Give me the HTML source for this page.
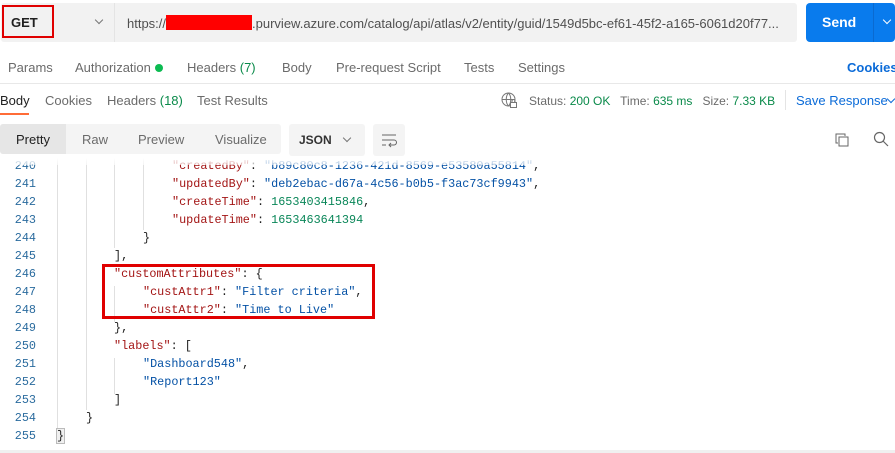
<!DOCTYPE html>
<html><head><meta charset="utf-8"><style>
*{margin:0;padding:0;box-sizing:border-box}
body{width:895px;height:453px;overflow:hidden;background:#fff;font-family:"Liberation Sans",sans-serif;position:relative;color:#212121}
.a{position:absolute;white-space:nowrap}
.t{font-size:13px;color:#6b6b6b}
.code{position:absolute;left:0;top:158px;width:895px;height:292px;overflow:hidden}
.ln{position:absolute;left:0;width:36px;text-align:right;font-family:"Liberation Mono",monospace;font-size:11.8px;color:#2a6b9e}
.c{position:absolute;font-family:"Liberation Mono",monospace;font-size:11.8px;color:#212121;white-space:pre}
.k{color:#a31515}.s{color:#0451a5}.n{color:#098658}
.g{position:absolute;width:1px;background:#e0e0e0}
.chev{position:absolute;width:6px;height:6px;border-right:1px solid #777;border-bottom:1px solid #777;transform:rotate(45deg)}
</style></head><body>
<div class="a" style="left:1px;top:3px;width:796px;height:39px;background:#f2f2f2;border-radius:3px"></div>
<div class="a" style="left:114px;top:3px;width:1px;height:39px;background:#e4e4e4"></div>
<div class="a" style="left:2px;top:5px;width:52px;height:33px;border:2px solid #e00000"></div>
<div class="a" style="left:11px;top:15px;font-size:13px;font-weight:bold;color:#212121">GET</div>
<div class="chev" style="left:96px;top:17px"></div>
<div class="a" style="left:127px;top:15px;font-size:13px;color:#505050">https://<span style="display:inline-block;width:86px;height:15px;background:#f00;vertical-align:-2px"></span>.purview.azure.com/catalog/api/atlas/v2/entity/guid/1549d5bc-ef61-45f2-a165-6061d20f77...</div>
<div class="a" style="left:806px;top:3px;width:89px;height:39px;background:#097bed;border-radius:4px"></div>
<div class="a" style="left:822px;top:14px;font-size:14px;font-weight:bold;color:#fff">Send</div>
<div class="a" style="left:873px;top:3px;width:1px;height:39px;background:#0a6ad0"></div>
<div class="chev" style="left:884px;top:17px;border-color:#fff"></div>

<div class="a t" style="left:8px;top:60px">Params</div>
<div class="a t" style="left:75px;top:60px">Authorization <span style="display:inline-block;width:8px;height:8px;border-radius:50%;background:#0cbb52"></span></div>
<div class="a t" style="left:187px;top:60px">Headers <span style="color:#0a8a4a">(7)</span></div>
<div class="a t" style="left:282px;top:60px">Body</div>
<div class="a t" style="left:336px;top:60px">Pre-request Script</div>
<div class="a t" style="left:464px;top:60px">Tests</div>
<div class="a t" style="left:518px;top:60px">Settings</div>
<div class="a" style="left:847px;top:60px;font-size:13px;font-weight:bold;color:#0b6bd8">Cookies</div>
<div class="a" style="left:0;top:83px;width:895px;height:1px;background:#e8e8e8"></div>

<div class="a" style="left:0;top:93px;font-size:13px;color:#212121">Body</div>
<div class="a" style="left:0;top:113px;width:29px;height:2px;background:#ff6c37"></div>
<div class="a t" style="left:45px;top:93px">Cookies</div>
<div class="a t" style="left:107px;top:93px">Headers <span style="color:#0a8a4a">(18)</span></div>
<div class="a t" style="left:197px;top:93px">Test Results</div>
<svg class="a" style="left:501px;top:92px" width="17" height="17" viewBox="0 0 17 17" fill="none" stroke="#777" stroke-width="1"><circle cx="7.5" cy="7.5" r="6.5"/><path d="M1 7.5h13M7.5 1c-3 3-3 10 0 13M7.5 1c3 3 3 10 0 13"/><rect x="9.5" y="10.5" width="6" height="5" fill="#fff"/><path d="M11 10.5V9a1.5 1.5 0 0 1 3 0v1.5"/></svg>
<div class="a" style="left:529px;top:94px;font-size:12px;color:#6b6b6b">Status: <span style="color:#0a8a4a">200 OK</span>&nbsp;&nbsp; Time: <span style="color:#0a8a4a">635 ms</span>&nbsp;&nbsp; Size: <span style="color:#0a8a4a">7.33 KB</span></div>
<div class="a" style="left:785px;top:90px;width:1px;height:20px;background:#e4e4e4"></div>
<div class="a" style="left:796px;top:93px;font-size:13px;color:#0b6bd8">Save Response</div>
<div class="chev" style="left:888px;top:96px;border-color:#0b6bd8"></div>

<div class="a" style="left:0;top:124px;width:281px;height:30px;background:#f4f4f4;border-radius:3px"></div>
<div class="a" style="left:0;top:124px;width:66px;height:30px;background:#e6e6e6;border-radius:3px 0 0 3px"></div>
<div class="a" style="left:16px;top:132px;font-size:13px;color:#212121">Pretty</div>
<div class="a t" style="left:82px;top:132px">Raw</div>
<div class="a t" style="left:138px;top:132px">Preview</div>
<div class="a t" style="left:215px;top:132px">Visualize</div>
<div class="a" style="left:289px;top:124px;width:76px;height:32px;background:#f4f4f4;border-radius:3px"></div>
<div class="a" style="left:299px;top:133px;font-size:12px;font-weight:bold;color:#333">JSON</div>
<div class="chev" style="left:344px;top:135px"></div>
<div class="a" style="left:373px;top:124px;width:32px;height:32px;background:#f4f4f4;border-radius:3px"></div>
<svg class="a" style="left:381px;top:132px" width="16" height="16" viewBox="0 0 16 16" fill="none" stroke="#666" stroke-width="1"><path d="M1 3h14M1 8h12a2.5 2.5 0 0 1 0 5H8M10 11l-2 2 2 2M1 13h4"/></svg>
<svg class="a" style="left:834px;top:132px" width="16" height="16" viewBox="0 0 16 16" fill="none" stroke="#666"><path d="M4 11H2V2h9v2"/><rect x="5" y="5" width="9" height="9"/></svg>
<svg class="a" style="left:873px;top:131px" width="16" height="16" viewBox="0 0 16 16" fill="none" stroke="#666" stroke-width="1.2"><circle cx="6.5" cy="6.5" r="5"/><path d="M10 10l5 5"/></svg>

<div class="code">
<div class="g" style="left:57px;top:0;height:270px"></div>
<div class="g" style="left:86px;top:0;height:252px"></div>
<div class="g" style="left:114px;top:0;height:90px"></div>
<div class="g" style="left:143px;top:0;height:72px"></div>
<div class="g" style="left:114px;top:128px;height:36px"></div>
<div class="g" style="left:114px;top:200px;height:36px"></div>
<div class="ln" style="top:1px">240</div><div class="c" style="left:172px;top:1px"><span class="k">"createdBy"</span>: <span class="s">"b89c80c8-1236-421d-8569-e53580a55814"</span>,</div>
<div class="ln" style="top:19px">241</div><div class="c" style="left:172px;top:19px"><span class="k">"updatedBy"</span>: <span class="s">"deb2ebac-d67a-4c56-b0b5-f3ac73cf9943"</span>,</div>
<div class="ln" style="top:37px">242</div><div class="c" style="left:172px;top:37px"><span class="k">"createTime"</span>: <span class="n">1653403415846</span>,</div>
<div class="ln" style="top:55px">243</div><div class="c" style="left:172px;top:55px"><span class="k">"updateTime"</span>: <span class="n">1653463641394</span></div>
<div class="ln" style="top:73px">244</div><div class="c" style="left:143px;top:73px">}</div>
<div class="ln" style="top:91px">245</div><div class="c" style="left:114px;top:91px">],</div>
<div class="ln" style="top:109px">246</div><div class="c" style="left:114px;top:109px"><span class="k">"customAttributes"</span>: {</div>
<div class="ln" style="top:127px">247</div><div class="c" style="left:143px;top:127px"><span class="k">"custAttr1"</span>: <span class="s">"Filter criteria"</span>,</div>
<div class="ln" style="top:145px">248</div><div class="c" style="left:143px;top:145px"><span class="k">"custAttr2"</span>: <span class="s">"Time to Live"</span></div>
<div class="ln" style="top:163px">249</div><div class="c" style="left:114px;top:163px">},</div>
<div class="ln" style="top:181px">250</div><div class="c" style="left:114px;top:181px"><span class="k">"labels"</span>: [</div>
<div class="ln" style="top:199px">251</div><div class="c" style="left:143px;top:199px"><span class="s">"Dashboard548"</span>,</div>
<div class="ln" style="top:217px">252</div><div class="c" style="left:143px;top:217px"><span class="s">"Report123"</span></div>
<div class="ln" style="top:235px">253</div><div class="c" style="left:114px;top:235px">]</div>
<div class="ln" style="top:253px">254</div><div class="c" style="left:86px;top:253px">}</div>
<div class="ln" style="top:271px">255</div><div class="c" style="left:57px;top:271px;outline:1px solid #bbb;background:#f0f0f0">}</div>
<div class="a" style="left:0;top:0;width:895px;height:7px;background:linear-gradient(rgba(255,255,255,1),rgba(255,255,255,0.6))"></div>
<div class="a" style="left:102px;top:106px;width:273px;height:55px;border:3px solid #e00000"></div>
</div>
<div class="a" style="left:0;top:450px;width:895px;height:3px;background:#f0f0f0"></div>
</body></html>
